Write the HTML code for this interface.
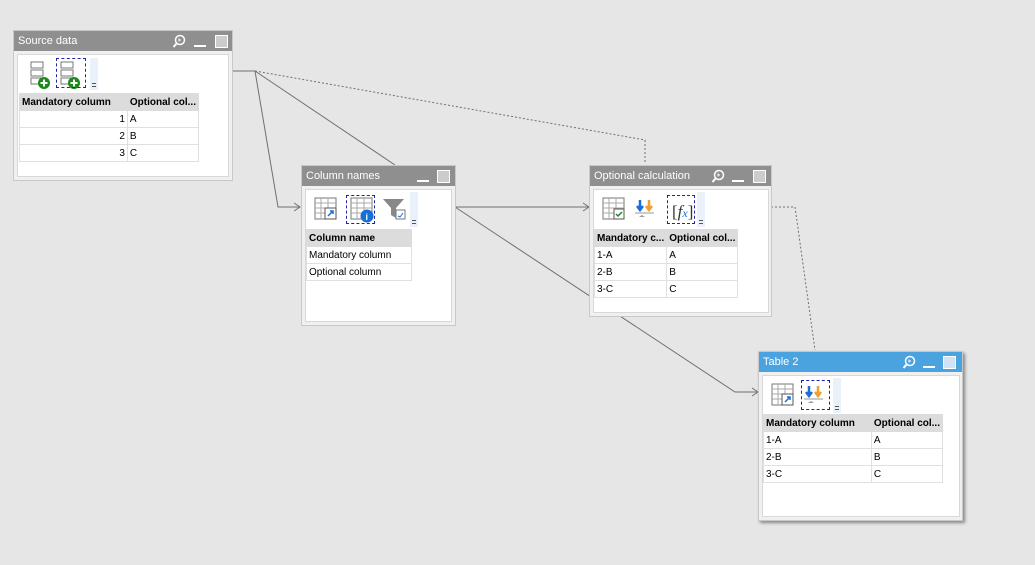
<!DOCTYPE html><html><head><style>
body{margin:0;width:1035px;height:565px;background:#e6e6e6;position:relative;overflow:hidden;font-family:"Liberation Sans",sans-serif;font-size:10px;color:#000}
.p{position:absolute;background:#f0f0f0;border:1px solid #c8c8c8}
.t{height:20px;background:#8f8f8f;color:#fff;font-size:11px;line-height:20px;padding-left:4px;position:relative}
.b{position:absolute;background:#fff;border:1px solid #d8d8d8}
.tb{position:absolute;width:8px;background:#eaf1fb}
.tb:after{content:"";position:absolute;left:2px;bottom:3px;width:4px;height:2px;border-top:1px solid #555;border-bottom:1px solid #555}
table{position:absolute;border-collapse:collapse}
td{height:16px;border:1px solid #e0e0e0;padding:0 2px;white-space:nowrap;overflow:hidden}
tr:first-child td{background:#dcdcdc;font-weight:bold;border-color:#dcdcdc}
.mg{position:absolute;top:3px}
.mx{position:absolute;top:4px;width:11px;height:11px;border:1px solid #fff;background:#ccc}
.mn{position:absolute;top:14px;width:12px;height:2px;background:#fff}
.sel{position:absolute;border:1px dashed #2222aa}
</style></head><body>
<svg width="1035" height="565" style="position:absolute;left:0;top:0">
<g stroke="#707070" fill="none" stroke-width="1">
<path d="M232 71H255L278 207H300M294 203l6 4-6 4"/>
<path d="M255 71L395 165"/>
<path d="M455 207H589M583 203l6 4-6 4"/>
<path d="M455 207L735 392H758M752 388l6 4-6 4"/>
<path d="M255 71L645 140V163" stroke-dasharray="2,2"/>
<path d="M771 207H795L815 350" stroke-dasharray="2,2"/>
</g></svg>
<svg width="0" height="0" style="position:absolute"><defs><g id="mag"><circle cx="8" cy="6" r="4.5" fill="none" stroke="#fff" stroke-width="1.5"/><path d="M5 9l-3.5 4" stroke="#fff" stroke-width="2"/><path d="M7 4.5v3M7 6h2" stroke="#fff"/></g></defs></svg>

<div class="p" style="left:13px;top:30px;width:218px;height:149px">
<div class="t">Source data<svg class="mg" style="left:158px" width="14" height="14"><use href="#mag"/></svg><div class="mn" style="left:180px"></div><div class="mx" style="left:201px"></div></div>
<div class="b" style="left:3px;top:23px;width:210px;height:121px">
<svg style="position:absolute;left:10px;top:5px" width="60" height="30"><g fill="#fff" stroke="#777"><rect x="3" y="2" width="12" height="6"/><rect x="3" y="10" width="12" height="6"/><rect x="3" y="18" width="12" height="6"/><rect x="33" y="2" width="12" height="6"/><rect x="33" y="10" width="12" height="6"/><rect x="33" y="18" width="12" height="6"/></g><circle cx="16" cy="23" r="6" fill="#1a8a1a"/><circle cx="46" cy="23" r="6" fill="#1a8a1a"/><path d="M12.5 23h7M16 19.5v7M42.5 23h7M46 19.5v7" stroke="#fff" stroke-width="2"/></svg>
<div class="sel" style="left:38px;top:3px;width:28px;height:28px"></div>
<div class="tb" style="left:72px;top:3px;height:32px"></div>
<table style="left:1px;top:38px;width:180px"><tr><td style="width:103px">Mandatory column</td><td>Optional col...</td></tr><tr><td style="text-align:right">1</td><td>A</td></tr><tr><td style="text-align:right">2</td><td>B</td></tr><tr><td style="text-align:right">3</td><td>C</td></tr></table>
</div></div>

<div class="p" style="left:301px;top:165px;width:153px;height:159px">
<div class="t">Column names<div class="mn" style="left:115px"></div><div class="mx" style="left:135px"></div></div>
<div class="b" style="left:3px;top:23px;width:145px;height:131px">
<svg style="position:absolute;left:8px;top:6px" width="100" height="28"><g fill="#fff" stroke="#777"><rect x="1" y="2" width="21" height="21"/><rect x="37" y="2" width="21" height="21"/></g><path d="M1 7h21M1 12h21M1 17h21M7 2v21M14 2v21M37 7h21M37 12h21M37 17h21M43 2v21M50 2v21" stroke="#aaa"/><rect x="11" y="12" width="11" height="11" fill="#fff" stroke="#555"/><path d="M14 20l5-5M16 15h3v3" stroke="#1a6fd6" stroke-width="1.5" fill="none"/><circle cx="53" cy="20" r="6.5" fill="#1a6fd6"/><text x="51.5" y="24" fill="#fff" font-size="9" font-weight="bold">i</text><path d="M69 3h21l-8 9v10l-5-3v-7z" fill="#888"/><rect x="82" y="14" width="9" height="9" fill="#fff" stroke="#777"/><path d="M84 20l2 1 3-4" stroke="#1a6fd6" fill="none"/></svg>
<div class="sel" style="left:40px;top:5px;width:27px;height:27px"></div>
<div class="tb" style="left:104px;top:2px;height:35px"></div>
<table style="left:0;top:39px;width:106px"><tr><td>Column name</td></tr><tr><td>Mandatory column</td></tr><tr><td>Optional column</td></tr></table>
</div></div>

<div class="p" style="left:589px;top:165px;width:181px;height:150px">
<div class="t">Optional calculation<svg class="mg" style="left:121px" width="14" height="14"><use href="#mag"/></svg><div class="mn" style="left:142px"></div><div class="mx" style="left:163px"></div></div>
<div class="b" style="left:3px;top:23px;width:174px;height:122px">
<svg style="position:absolute;left:8px;top:6px" width="100" height="28"><rect x="1" y="2" width="21" height="21" fill="#fff" stroke="#777"/><path d="M1 7h21M1 12h21M1 17h21M7 2v21M14 2v21" stroke="#aaa"/><rect x="12" y="13" width="10" height="10" fill="#fff" stroke="#555"/><path d="M14 18l2 2 4-4" stroke="#1a8a1a" stroke-width="1.5" fill="none"/><path d="M38 4v10M35 10l3 4 3-4" stroke="#1a6fd6" stroke-width="2.5" fill="none"/><path d="M47 4v10M44 10l3 4 3-4" stroke="#f0a030" stroke-width="2.5" fill="none"/><path d="M33 17h19" stroke="#999"/><path d="M40 19l3 2h-6z" fill="#999"/><text x="70" y="21" font-size="17" font-family="Liberation Serif" fill="#333">[<tspan font-style="italic">f</tspan><tspan font-size="12" font-style="italic" fill="#1a6fd6">x</tspan>]</text></svg>
<div class="sel" style="left:73px;top:5px;width:26px;height:27px"></div>
<div class="tb" style="left:103px;top:2px;height:35px"></div>
<table style="left:0;top:39px;width:143px"><tr><td style="width:65px">Mandatory c...</td><td>Optional col...</td></tr><tr><td>1-A</td><td>A</td></tr><tr><td>2-B</td><td>B</td></tr><tr><td>3-C</td><td>C</td></tr></table>
</div></div>

<div class="p" style="left:758px;top:351px;width:203px;height:168px;box-shadow:2px 2px 3px #888">
<div class="t" style="background:#4aa3df">Table 2<svg class="mg" style="left:143px" width="14" height="14"><use href="#mag"/></svg><div class="mn" style="left:164px"></div><div class="mx" style="left:184px;background:#cfe3f4"></div></div>
<div class="b" style="left:3px;top:23px;width:196px;height:140px">
<svg style="position:absolute;left:8px;top:6px" width="60" height="28"><rect x="1" y="2" width="21" height="21" fill="#fff" stroke="#777"/><path d="M1 7h21M1 12h21M1 17h21M7 2v21M14 2v21" stroke="#aaa"/><rect x="11" y="12" width="11" height="11" fill="#fff" stroke="#555"/><path d="M14 20l5-5M16 15h3v3" stroke="#1a6fd6" stroke-width="1.5" fill="none"/><path d="M38 4v10M35 10l3 4 3-4" stroke="#1a6fd6" stroke-width="2.5" fill="none"/><path d="M47 4v10M44 10l3 4 3-4" stroke="#f0a030" stroke-width="2.5" fill="none"/><path d="M33 17h19" stroke="#999"/><path d="M40 19l3 2h-6z" fill="#999"/></svg>
<div class="sel" style="left:38px;top:4px;width:27px;height:28px"></div>
<div class="tb" style="left:70px;top:2px;height:35px"></div>
<table style="left:0;top:38px;width:180px"><tr><td style="width:104px">Mandatory column</td><td>Optional col...</td></tr><tr><td>1-A</td><td>A</td></tr><tr><td>2-B</td><td>B</td></tr><tr><td>3-C</td><td>C</td></tr></table>
</div></div>
</body></html>
